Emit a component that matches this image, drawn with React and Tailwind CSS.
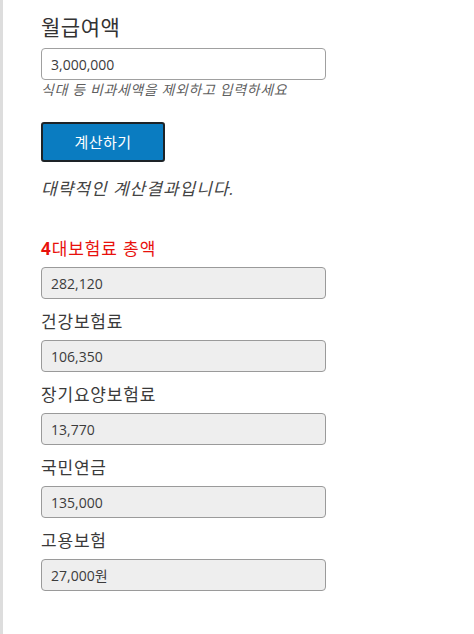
const FONT = { fontFamily: '"Open Sans", "Noto Sans CJK KR", sans-serif' };

function ResultField({ label, value, red }) {
  return (
    <div className="flex flex-col">
      <label
        className={
          red
            ? 'mt-[11px] mb-[6px] text-[17px] leading-[24px] tracking-[0.9px] text-[#e8100c]'
            : 'mt-[11px] mb-[6px] text-[17px] leading-[24px] tracking-[0.8px] text-[#3a3a3a]'
        }
      >
        {red ? (
          <>
            <span className="font-bold">4</span>대보험료 총액
          </>
        ) : (
          label
        )}
      </label>
      <input
        readOnly
        value={value}
        className="w-[285px] h-[32px] px-[9px] rounded-[4px] border border-[#9a9a9a] bg-[#eeeeee] text-[14px] text-[#3c3c3c] outline-none"
        style={FONT}
      />
    </div>
  );
}

export default function App() {
  const rows = [
    { label: '건강보험료', value: '106,350' },
    { label: '장기요양보험료', value: '13,770' },
    { label: '국민연금', value: '135,000' },
    { label: '고용보험', value: '27,000원' },
  ];

  return (
    <div
      className="min-h-[634px] bg-white border-l-[3px] border-[#dddddd] pl-[38px] pt-[12px]"
      style={FONT}
    >
      <div className="flex flex-col">
        <label className="text-[21px] leading-[30px] tracking-[0.5px] text-[#333333] mb-[6px]">월급여액</label>
        <input
          defaultValue="3,000,000"
          className="w-[285px] h-[32px] px-[9px] rounded-[4px] border border-[#a0a0a0] bg-white text-[14px] text-[#3c3c3c] outline-none"
          style={FONT}
        />
        <p className="text-[14px] leading-[20px] tracking-[0.6px] italic text-[#5f5f5f]">
          식대 등 비과세액을 제외하고 입력하세요
        </p>
      </div>

      <button
        type="button"
        className="mt-[22px] w-[124px] h-[40px] rounded-[3px] border-2 border-[#1d2327] bg-[#0a7cc1] text-white text-[15px] tracking-[0.5px]"
        style={FONT}
      >
        계산하기
      </button>

      <p className="mt-[15px] text-[17px] leading-[24px] tracking-[1px] italic text-[#444444]">
        대략적인 계산결과입니다.
      </p>

      <div className="mt-[25px] flex flex-col">
        <ResultField red value="282,120" />
        {rows.map((r) => (
          <ResultField key={r.label} label={r.label} value={r.value} />
        ))}
      </div>
    </div>
  );
}
